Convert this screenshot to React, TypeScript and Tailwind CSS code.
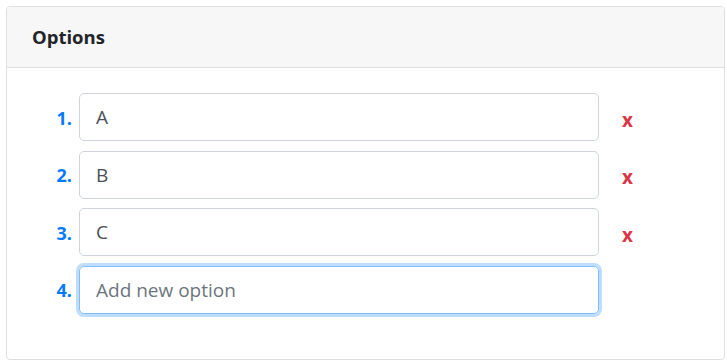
import { useEffect, useRef, useState } from "react";

const font = { fontFamily: '"Segoe UI", "Open Sans", "Noto Sans", sans-serif' };

export default function App() {
  const [options, setOptions] = useState(["A", "B", "C"]);
  const [draft, setDraft] = useState("");
  const newRef = useRef<HTMLInputElement>(null);

  useEffect(() => {
    newRef.current?.focus();
  }, []);

  const removeOption = (idx: number) => setOptions((prev) => prev.filter((_, i) => i !== idx));

  return (
    <div className="p-[6px] bg-white" style={font}>
      <div className="w-[719px] h-[354px] rounded border border-[#dfdfdf] bg-white overflow-hidden">
        <div className="h-[61px] flex items-center px-[25px] bg-[#f7f7f7] border-b border-[#dfdfdf]">
          <h5 className="text-[18.5px] font-bold text-[#212529]">Options</h5>
        </div>
        <div className="pt-[25px] flex flex-col gap-[9.5px]">
          {options.map((opt, i) => (
            <div key={i} className="flex items-center">
              <span className="w-[72px] pr-[7px] pt-[2px] text-right text-[18px] font-bold text-[#007bff]">{i + 1}.</span>
              <input
                className="w-[520px] h-[48px] px-4 text-[19px] text-[#495057] border border-[#ced4da] rounded-[5px] outline-none"
                value={opt}
                onChange={(e) => setOptions((prev) => prev.map((o, j) => (j === i ? e.target.value : o)))}
              />
              <button
                className="ml-[23px] mt-[6px] text-[19px] font-bold text-[#dc3545] leading-none"
                onClick={() => removeOption(i)}
              >
                x
              </button>
            </div>
          ))}
          <div className="flex items-center">
            <span className="w-[72px] pr-[7px] pt-[2px] text-right text-[18px] font-bold text-[#007bff]">{options.length + 1}.</span>
            <input
              ref={newRef}
              className="w-[520px] h-[48px] px-4 text-[19px] text-[#495057] placeholder:text-[#6c757d] border border-[#80bdff] rounded-[5px] outline-none shadow-[0_0_0_3px_rgba(0,123,255,0.25)]"
              placeholder="Add new option"
              value={draft}
              onChange={(e) => setDraft(e.target.value)}
            />
          </div>
        </div>
      </div>
    </div>
  );
}
